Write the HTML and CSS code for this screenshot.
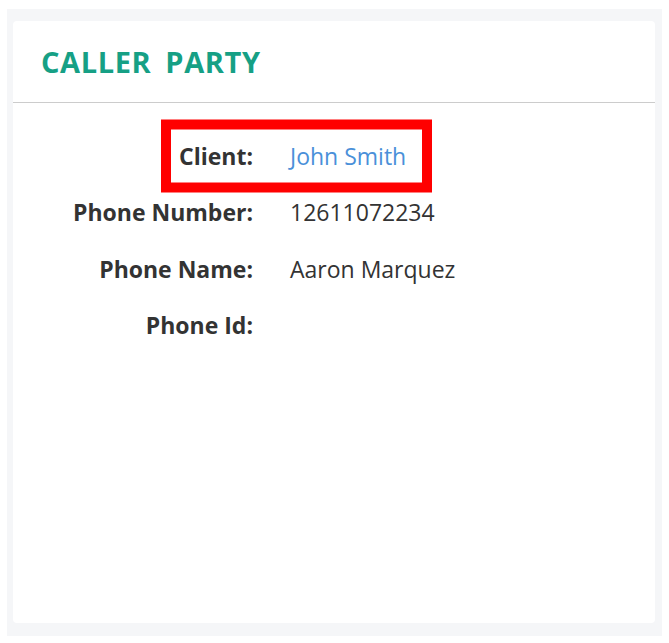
FILE: index.html
```html
<!DOCTYPE html>
<html lang="en">
<head>
<meta charset="utf-8">
<title>Caller Party</title>
<link rel="stylesheet" href="styles.css">
</head>
<body>
<div class="outer">
  <section class="card">
    <header class="card-header">
      <h2 class="card-title">CALLER PARTY</h2>
    </header>
    <div class="rows">
      <div class="row highlight">
        <span class="label">Client:</span>
        <a class="value link" href="#">John Smith</a>
      </div>
      <div class="row">
        <span class="label">Phone Number:</span>
        <span class="value">12611072234</span>
      </div>
      <div class="row">
        <span class="label">Phone Name:</span>
        <span class="value">Aaron Marquez</span>
      </div>
      <div class="row">
        <span class="label">Phone Id:</span>
        <span class="value"></span>
      </div>
    </div>
  </section>
</div>
</body>
</html>
```

FILE: styles.css
```css
html, body {
  margin: 0;
  padding: 0;
  background: #ffffff;
}
body {
  font-family: "Open Sans", "Liberation Sans", sans-serif;
  color: #333333;
}
.outer {
  box-sizing: border-box;
  margin: 9px 0 0 7px;
  width: 655px;
  height: 627px;
  padding: 12px 7px 13px 6px;
  background: #f5f6f8;
}
.card {
  height: 100%;
  background: #ffffff;
  border-radius: 4px;
  display: flex;
  flex-direction: column;
}
.card-header {
  height: 82px;
  box-sizing: border-box;
  border-bottom: 1px solid #cccccc;
  padding-left: 28px;
  display: flex;
  align-items: center;
}
.card-title {
  margin: 0;
  font-size: 29px;
  font-weight: 700;
  letter-spacing: 0.6px;
  word-spacing: 6px;
  color: #16a085;
}
.rows {
  padding-top: 25px;
  display: flex;
  flex-direction: column;
}
.row {
  height: 56.3px;
  display: flex;
  align-items: center;
  font-size: 23px;
}
.label {
  width: 240px;
  text-align: right;
  font-weight: 700;
  color: #333333;
}
.value {
  margin-left: 37px;
  color: #333333;
}
.link {
  color: #4a90d9;
  text-decoration: none;
}
.highlight {
  position: relative;
}
.highlight::after {
  content: "";
  position: absolute;
  left: 148px;
  width: 251px;
  top: 50%;
  height: 53px;
  transform: translateY(-50%);
  border: 10px solid #ff0000;
  pointer-events: none;
}
```
